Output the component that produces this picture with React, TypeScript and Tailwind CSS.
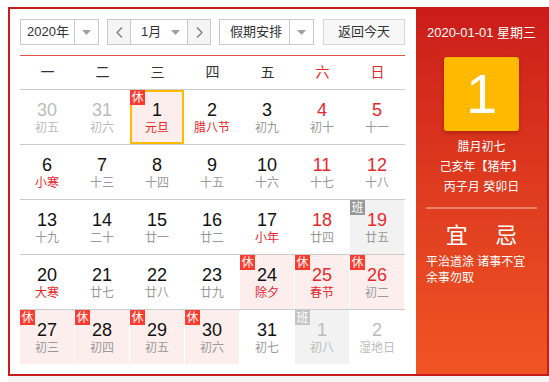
import React from "react";

type Cell = [number, string, string?];

// flags: o = other month, f = festival (red lunar), x = 休, b = 班, s = selected
const rows: Cell[][] = [
    [[30, "初五", "o"], [31, "初六", "o"], [1, "元旦", "fxs"], [2, "腊八节", "f"], [3, "初九"], [4, "初十"], [5, "十一"]],
    [[6, "小寒", "f"], [7, "十三"], [8, "十四"], [9, "十五"], [10, "十六"], [11, "十七"], [12, "十八"]],
    [[13, "十九"], [14, "二十"], [15, "廿一"], [16, "廿二"], [17, "小年", "f"], [18, "廿四"], [19, "廿五", "b"]],
    [[20, "大寒", "f"], [21, "廿七"], [22, "廿八"], [23, "廿九"], [24, "除夕", "fx"], [25, "春节", "fx"], [26, "初二", "x"]],
    [[27, "初三", "x"], [28, "初四", "x"], [29, "初五", "x"], [30, "初六", "x"], [31, "初七"], [1, "初八", "ob"], [2, "湿地日", "o"]],
];

const weekdays = ["一", "二", "三", "四", "五", "六", "日"];

function Caret() {
    return (
        <svg width="9" height="5" viewBox="0 0 9 5">
            <path d="M0 0h9L4.5 5z" fill="#a0a0a0" />
        </svg>
    );
}

function Chevron({ dir }: { dir: "l" | "r" }) {
    return (
        <svg width="7" height="11" viewBox="0 0 7 11">
            <path d={dir === "l" ? "M6 0.5L1 5.5l5 5" : "M1 0.5l5 5-5 5"} fill="none" stroke="#777" strokeWidth="1.2" />
        </svg>
    );
}

function DayCell({ cell, col }: { cell: Cell; col: number }) {
    const [num, lunar, flags = ""] = cell;
    const other = flags.includes("o");
    const weekend = col >= 5;
    const numColor = other ? "text-[#bbbbbb]" : weekend ? "text-[#e8282b]" : "text-[#111111]";
    const lunarColor = other ? "text-[#bbbbbb]" : flags.includes("f") ? "text-[#e8282b]" : "text-[#999999]";
    const bg = flags.includes("x") || flags.includes("s") ? "bg-[#fdeeee]" : flags.includes("b") ? "bg-[#f2f2f2]" : "bg-white";
    return (
        <div className={`relative mr-px h-[54px] text-center ${bg} ${flags.includes("s") ? "ring-2 ring-inset ring-[#ffbb00]" : ""}`}>
            {flags.includes("x") && (
                <span className="absolute left-0 top-0 flex h-[15px] w-[15px] items-center justify-center bg-[#ff3b30] text-[12px] leading-none text-white">
                    休
                </span>
            )}
            {flags.includes("b") && (
                <span className={`absolute left-0 top-0 flex h-[15px] w-[15px] items-center justify-center text-[12px] leading-none text-white ${other ? "bg-[#c4c4c4]" : "bg-[#999999]"}`}>
                    班
                </span>
            )}
            <div className={`pt-[10px] text-[18px] leading-[20px] ${numColor}`}>{num}</div>
            <div className={`text-[12px] leading-4 ${lunarColor}`}>{lunar}</div>
        </div>
    );
}

export default function App() {
    return (
        <div className="h-[382px] w-[549px] overflow-hidden bg-white font-['Liberation_Sans','Noto_Sans_CJK_SC',sans-serif]">
            <div className="ml-[8px] mt-[7px] flex h-[369px] w-[541px] border-2 border-[#c91d1b]">
                {/* Calendar */}
                <div className="w-[406px] pl-[10px] pr-[11px] pt-[10px]">
                    <div className="flex h-[26px] items-stretch gap-[8px] text-[13px] text-[#333333]">
                        <div className="flex w-[79px] border border-[#c8c8c8]">
                            <span className="flex flex-1 items-center justify-center pl-[1px]">2020年</span>
                            <span className="flex w-[24px] items-center justify-center border-l border-[#c8c8c8]">
                                <Caret />
                            </span>
                        </div>
                        <div className="flex w-[104px] border border-[#c8c8c8]">
                            <span className="flex w-[22px] items-center justify-center bg-[#f5f5f5]">
                                <Chevron dir="l" />
                            </span>
                            <span className="flex flex-1 items-center border-x border-[#c8c8c8] pl-[10px]">
                                <span className="flex-1">1月</span>
                                <span className="mr-[7px] flex">
                                    <Caret />
                                </span>
                            </span>
                            <span className="flex w-[22px] items-center justify-center bg-[#f5f5f5]">
                                <Chevron dir="r" />
                            </span>
                        </div>
                        <div className="flex w-[95px] border border-[#c8c8c8]">
                            <span className="flex flex-1 items-center pl-[10px]">假期安排</span>
                            <span className="flex w-[24px] items-center justify-center border-l border-[#c8c8c8]">
                                <Caret />
                            </span>
                        </div>
                        <button className="ml-[1px] flex w-[82px] items-center justify-center border border-[#d8d8d8] bg-[#f7f7f7] text-[13px] text-[#333333]">
                            返回今天
                        </button>
                    </div>

                    <div className="mt-[10px] border-t border-[#e5514a]" />

                    <div className="grid h-[34px] grid-cols-7 border-b border-[#cccccc] text-[14px]">
                        {weekdays.map((w, i) => (
                            <div key={w} className={`flex items-center justify-center ${i >= 5 ? "text-[#e8282b]" : "text-[#333333]"}`}>
                                {w}
                            </div>
                        ))}
                    </div>

                    {rows.map((row, r) => (
                        <div key={r} className={`grid grid-cols-7 ${r < rows.length - 1 ? "border-b border-[#cccccc]" : ""}`}>
                            {row.map((c, i) => (
                                <DayCell key={i} cell={c} col={i} />
                            ))}
                        </div>
                    ))}
                </div>

                {/* Detail panel */}
                <div className="flex w-[131px] flex-col items-center bg-gradient-to-b from-[#cb1c1a] to-[#f15424] px-[10px] text-white">
                    <div className="mt-[15px] text-[13px] leading-[18px]">2020-01-01 星期三</div>
                    <div className="mt-[15px] flex h-[74px] w-[75px] items-center justify-center rounded-[3px] bg-[#ffb900] text-[56px] leading-none shadow-[0_2px_4px_rgba(120,0,0,0.35)]">
                        1
                    </div>
                    <div className="mt-[6px] text-center text-[12px] leading-[20px]">
                        <div>腊月初七</div>
                        <div>己亥年【猪年】</div>
                        <div>丙子月 癸卯日</div>
                    </div>
                    <div className="mt-[10px] h-[2px] w-full bg-white/35" />
                    <div className="mt-[14px] flex w-full justify-around px-[6px] text-[22px] leading-[26px]">
                        <span>宜</span>
                        <span>忌</span>
                    </div>
                    <div className="mt-[5px] w-full text-[12px] leading-[16px]">
                        平治道涂 诸事不宜
                        <br />
                        余事勿取
                    </div>
                </div>
            </div>
            <div className="ml-[8px] h-[6px] bg-[#f5f5f5]" />
        </div>
    );
}
